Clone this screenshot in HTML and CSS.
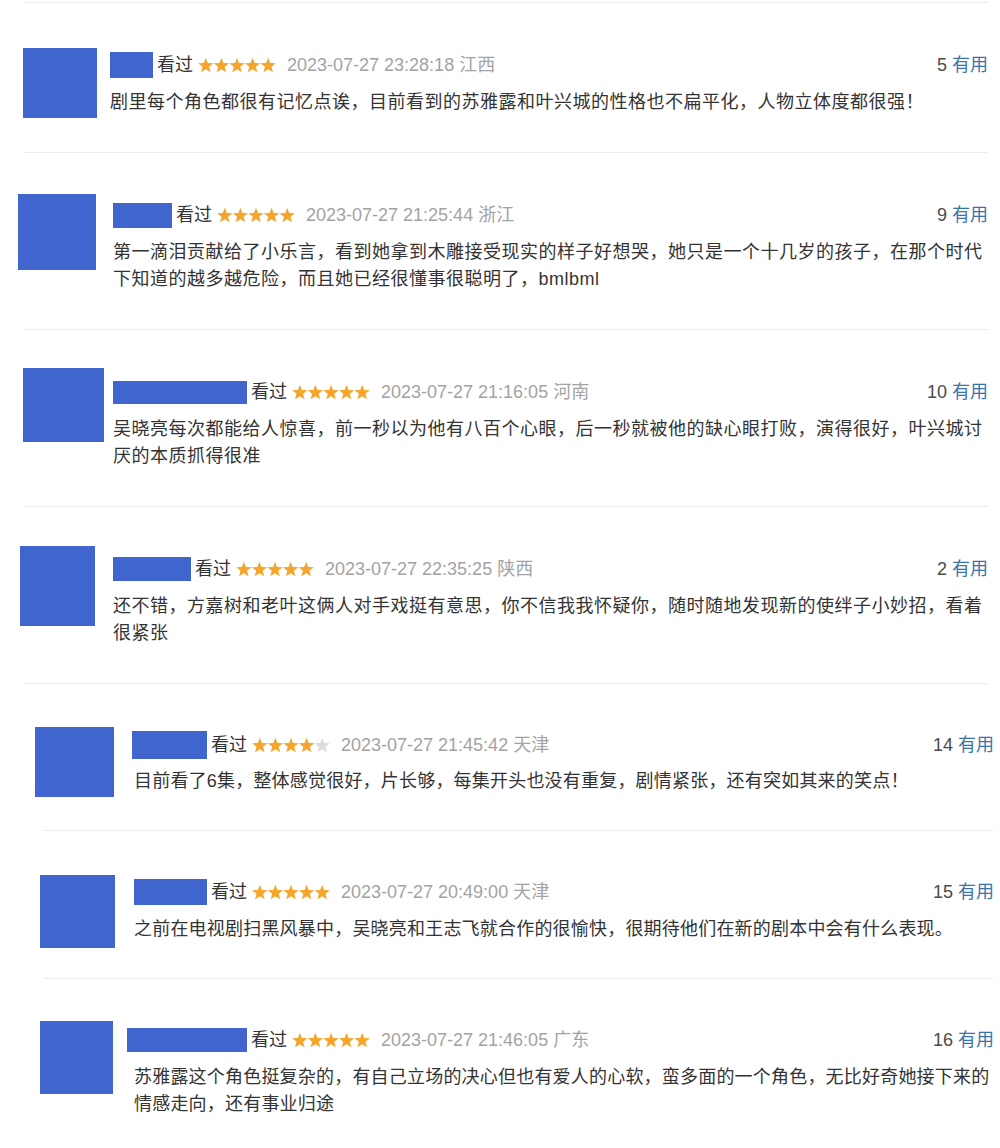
FILE: index.html
```html
<!DOCTYPE html>
<html lang="zh-CN">
<head>
<meta charset="utf-8">
<title>短评</title>
<link rel="stylesheet" href="styles.css">
</head>
<body>
<svg width="0" height="0" class="defs" aria-hidden="true">
  <defs>
    <path id="star" d="M8 0.5L10.06 5.97L15.89 6.24L11.33 9.88L12.88 15.51L8 12.3L3.12 15.51L4.67 9.88L0.11 6.24L5.94 5.97Z"/>
  </defs>
</svg>
<div class="feed">
  <hr class="sep first">

  <div class="comment c1">
    <div class="avatar"></div>
    <div class="body">
      <div class="head">
        <span class="name"></span><span class="status">看过</span>
        <svg class="stars" viewBox="0 0 80 16"><use href="#star" class="on"/><use href="#star" x="16" class="on"/><use href="#star" x="32" class="on"/><use href="#star" x="48" class="on"/><use href="#star" x="64" class="on"/></svg>
        <span class="time">2023-07-27 23:28:18 江西</span>
        <span class="votes"><span class="count">5</span> <span class="useful">有用</span></span>
      </div>
      <p class="text">剧里每个角色都很有记忆点诶，目前看到的苏雅露和叶兴城的性格也不扁平化，人物立体度都很强！</p>
    </div>
  </div>
  <hr class="sep">

  <div class="comment c2">
    <div class="avatar"></div>
    <div class="body">
      <div class="head">
        <span class="name"></span><span class="status">看过</span>
        <svg class="stars" viewBox="0 0 80 16"><use href="#star" class="on"/><use href="#star" x="16" class="on"/><use href="#star" x="32" class="on"/><use href="#star" x="48" class="on"/><use href="#star" x="64" class="on"/></svg>
        <span class="time">2023-07-27 21:25:44 浙江</span>
        <span class="votes"><span class="count">9</span> <span class="useful">有用</span></span>
      </div>
      <p class="text">第一滴泪贡献给了小乐言，看到她拿到木雕接受现实的样子好想哭，她只是一个十几岁的孩子，在那个时代下知道的越多越危险，而且她已经很懂事很聪明了，bmlbml</p>
    </div>
  </div>
  <hr class="sep">

  <div class="comment c3">
    <div class="avatar"></div>
    <div class="body">
      <div class="head">
        <span class="name"></span><span class="status">看过</span>
        <svg class="stars" viewBox="0 0 80 16"><use href="#star" class="on"/><use href="#star" x="16" class="on"/><use href="#star" x="32" class="on"/><use href="#star" x="48" class="on"/><use href="#star" x="64" class="on"/></svg>
        <span class="time">2023-07-27 21:16:05 河南</span>
        <span class="votes"><span class="count">10</span> <span class="useful">有用</span></span>
      </div>
      <p class="text">吴晓亮每次都能给人惊喜，前一秒以为他有八百个心眼，后一秒就被他的缺心眼打败，演得很好，叶兴城讨厌的本质抓得很准</p>
    </div>
  </div>
  <hr class="sep">

  <div class="comment c4">
    <div class="avatar"></div>
    <div class="body">
      <div class="head">
        <span class="name"></span><span class="status">看过</span>
        <svg class="stars" viewBox="0 0 80 16"><use href="#star" class="on"/><use href="#star" x="16" class="on"/><use href="#star" x="32" class="on"/><use href="#star" x="48" class="on"/><use href="#star" x="64" class="on"/></svg>
        <span class="time">2023-07-27 22:35:25 陕西</span>
        <span class="votes"><span class="count">2</span> <span class="useful">有用</span></span>
      </div>
      <p class="text">还不错，方嘉树和老叶这俩人对手戏挺有意思，你不信我我怀疑你，随时随地发现新的使绊子小妙招，看着很紧张</p>
    </div>
  </div>
  <hr class="sep">

  <div class="comment c5">
    <div class="avatar"></div>
    <div class="body">
      <div class="head">
        <span class="name"></span><span class="status">看过</span>
        <svg class="stars" viewBox="0 0 80 16"><use href="#star" class="on"/><use href="#star" x="16" class="on"/><use href="#star" x="32" class="on"/><use href="#star" x="48" class="on"/><use href="#star" x="64" class="off"/></svg>
        <span class="time">2023-07-27 21:45:42 天津</span>
        <span class="votes"><span class="count">14</span> <span class="useful">有用</span></span>
      </div>
      <p class="text">目前看了6集，整体感觉很好，片长够，每集开头也没有重复，剧情紧张，还有突如其来的笑点！</p>
    </div>
  </div>
  <hr class="sep wide">

  <div class="comment c6">
    <div class="avatar"></div>
    <div class="body">
      <div class="head">
        <span class="name"></span><span class="status">看过</span>
        <svg class="stars" viewBox="0 0 80 16"><use href="#star" class="on"/><use href="#star" x="16" class="on"/><use href="#star" x="32" class="on"/><use href="#star" x="48" class="on"/><use href="#star" x="64" class="on"/></svg>
        <span class="time">2023-07-27 20:49:00 天津</span>
        <span class="votes"><span class="count">15</span> <span class="useful">有用</span></span>
      </div>
      <p class="text">之前在电视剧扫黑风暴中，吴晓亮和王志飞就合作的很愉快，很期待他们在新的剧本中会有什么表现。</p>
    </div>
  </div>
  <hr class="sep wide">

  <div class="comment c7">
    <div class="avatar"></div>
    <div class="body">
      <div class="head">
        <span class="name"></span><span class="status">看过</span>
        <svg class="stars" viewBox="0 0 80 16"><use href="#star" class="on"/><use href="#star" x="16" class="on"/><use href="#star" x="32" class="on"/><use href="#star" x="48" class="on"/><use href="#star" x="64" class="on"/></svg>
        <span class="time">2023-07-27 21:46:05 广东</span>
        <span class="votes"><span class="count">16</span> <span class="useful">有用</span></span>
      </div>
      <p class="text">苏雅露这个角色挺复杂的，有自己立场的决心但也有爱人的心软，蛮多面的一个角色，无比好奇她接下来的情感走向，还有事业归途</p>
    </div>
  </div>
</div>
</body>
</html>
```
FILE: styles.css
```css
html, body {
  margin: 0;
  padding: 0;
  background: #ffffff;
}

body {
  font-family: "Liberation Sans", "Noto Sans CJK SC", sans-serif;
  font-size: 18px;
  color: #333333;
}

.defs {
  position: absolute;
  width: 0;
  height: 0;
  overflow: hidden;
}

.feed {
  width: 1000px;
  height: 1148px;
  overflow: hidden;
}

.sep {
  border: 0;
  border-top: 1px solid #ececec;
  height: 0;
  margin: 0 12px 0 24px;
}

.sep.first {
  margin-top: 2px;
}

.sep.wide {
  margin: 0 7px 0 44px;
}

/* one comment */
.comment {
  display: flex;
  align-items: flex-start;
  padding-right: var(--pr, 12px);
  min-height: var(--h, 149px);
  box-sizing: border-box;
}

.avatar {
  flex: none;
  background: #4065cf;
  width: var(--aw);
  height: var(--ah);
  margin-left: var(--ax);
  margin-top: var(--at);
}

.body {
  flex: 1;
  min-width: 0;
  margin-left: var(--gap);
  padding-top: var(--pt, 49px);
  padding-bottom: var(--pb, 35px);
}

.head {
  display: flex;
  align-items: center;
  height: 26px;
  line-height: 26px;
  white-space: nowrap;
}

.name {
  flex: none;
  display: block;
  background: #4065cf;
  width: var(--nw);
  height: var(--nh, 25px);
  margin-left: var(--nx, 0px);
  margin-top: var(--ny, 0px);
}

.status {
  margin-left: 4px;
  color: #333333;
}

.stars {
  flex: none;
  width: 78px;
  height: 16px;
  margin-left: 5px;
  margin-top: -1px;
}

.stars .on {
  fill: #f5a52b;
}

.stars .off {
  fill: #dcdcdc;
}

.time {
  margin-left: 11px;
  color: #a3a3a3;
}

.votes {
  margin-left: auto;
}

.count {
  color: #4a4a4a;
}

.useful {
  color: #3b74ad;
}

.text {
  margin: var(--tm, 11px) 0 0;
  line-height: 27px;
  letter-spacing: var(--ls, 0.5px);
  color: #333333;
}

/* per-item geometry (stitched list) */
.c1 { --ax: 23px; --aw: 74px; --ah: 70px; --at: 45px; --gap: 13px; --nw: 43px; --nh: 26px; --nx: 0px; --h: 149px; }
.c2 { --ax: 18px; --aw: 78px; --ah: 76px; --at: 41px; --gap: 17px; --nw: 59px; --nh: 25px; --h: 176px; }
.c3 { --ax: 23px; --aw: 81px; --ah: 74px; --at: 38px; --gap: 9px;  --nw: 134px; --nh: 23px; --h: 176px; }
.c4 { --ax: 20px; --aw: 75px; --ah: 80px; --at: 39px; --gap: 18px; --nw: 78px; --nh: 24px; --h: 176px; }
.c5 { --ax: 35px; --aw: 79px; --ah: 70px; --at: 43px; --gap: 20px; --nw: 75px; --nh: 28px; --nx: -2px; --h: 146px; --pr: 6px; --pt: 48px; --tm: 10px; --pb: 35px; --ls: 0.2px; }
.c6 { --ax: 40px; --aw: 75px; --ah: 73px; --at: 44px; --gap: 19px; --nw: 73px; --nh: 26px; --h: 147px; --pr: 6px; --pt: 48px; --tm: 11px; --pb: 35px; --ls: 0.2px; }
.c7 { --ax: 40px; --aw: 73px; --ah: 73px; --at: 42px; --gap: 21px; --nw: 120px; --nh: 24px; --nx: -7px; --h: 169px; --pr: 6px; --pt: 48px; --tm: 11px; --pb: 20px; --ls: 0.2px; }
```
